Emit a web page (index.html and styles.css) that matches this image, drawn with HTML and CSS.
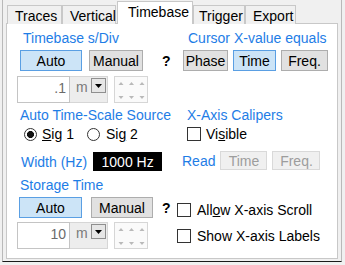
FILE: index.html
```html
<!DOCTYPE html>
<html>

<head>
    <title>Timebase</title>
    <link rel="stylesheet" href="styles.css">
</head>

<body>
    <div class="frame">
        <div class="tabctl">
            <div class="tabs">
                <div class="tab t-traces">Traces</div>
                <div class="tab t-vert">Vertical</div>
                <div class="tab active t-time">Timebase</div>
                <div class="tab t-trig">Trigger</div>
                <div class="tab t-exp">Export</div>
            </div>
            <div class="panel">
                <div class="grid">
                    <!-- row 1 -->
                    <div class="lbl hd-tb">Timebase s/Div</div>
                    <div class="lbl hd-cur">Cursor X-value equals</div>

                    <!-- row 2 -->
                    <div class="row tb-mode">
                        <div class="btn on w-auto">Auto</div>
                        <div class="btn w-man">Manual</div>
                        <div class="help">?</div>
                    </div>
                    <div class="row cur-mode">
                        <div class="btn w-phase">Phase</div>
                        <div class="btn on w-time">Time</div>
                        <div class="btn w-freq">Freq.</div>
                    </div>

                    <!-- row 3 -->
                    <div class="spin">
                        <div class="spin-val">.1</div>
                        <div class="unit">
                            <span class="unit-m">m</span>
                            <span class="drop"><svg width="13" height="13" viewBox="0 0 13 13"><polygon points="3,5 10,5 6.5,9" fill="#000"/></svg></span>
                        </div>
                        <div class="stepper"><svg width="32" height="25" viewBox="0 0 32 25">
                            <g fill="#b9b9b9">
                                <polygon points="3.5,8 8.5,8 6,5"/>
                                <polygon points="14,8 19,8 16.5,5"/>
                                <polygon points="24.5,8 29.5,8 27,5"/>
                                <polygon points="3.5,19 8.5,19 6,22"/>
                                <polygon points="14,19 19,19 16.5,22"/>
                                <polygon points="24.5,19 29.5,19 27,22"/>
                            </g>
                        </svg></div>
                    </div>
                    <div></div>

                    <!-- row 4 -->
                    <div class="lbl hd-src">Auto Time-Scale Source</div>
                    <div class="lbl hd-cal">X-Axis Calipers</div>

                    <!-- row 5 -->
                    <div class="row radios">
                        <span class="radio on"></span><span class="opt"><u>S</u>ig 1</span>
                        <span class="radio r2"></span><span class="opt o2">Si<u>g</u> 2</span>
                    </div>
                    <div class="row chk-vis">
                        <span class="check"></span><span class="opt">Vi<u>s</u>ible</span>
                    </div>

                    <!-- row 6 -->
                    <div class="row width-row">
                        <span class="lbl-in">Width (Hz)</span>
                        <span class="readout">1000 Hz</span>
                    </div>
                    <div class="row read-row">
                        <span class="lbl-in">Read</span>
                        <div class="btn off w-rtime">Time</div>
                        <div class="btn off w-rfreq">Freq.</div>
                    </div>

                    <!-- row 7 -->
                    <div class="lbl hd-store">Storage Time</div>
                    <div></div>

                    <!-- row 8 -->
                    <div class="row st-mode">
                        <div class="btn on w-auto2">Auto</div>
                        <div class="btn w-man2">Manual</div>
                        <div class="help">?</div>
                    </div>
                    <div class="row chk-scroll">
                        <span class="check"></span><span class="opt">All<u>o</u>w X-axis Scroll</span>
                    </div>

                    <!-- row 9 -->
                    <div class="spin">
                        <div class="spin-val">10</div>
                        <div class="unit">
                            <span class="unit-m">m</span>
                            <span class="drop"><svg width="13" height="13" viewBox="0 0 13 13"><polygon points="3,5 10,5 6.5,9" fill="#000"/></svg></span>
                        </div>
                        <div class="stepper"><svg width="32" height="25" viewBox="0 0 32 25">
                            <g fill="#b9b9b9">
                                <polygon points="3.5,8 8.5,8 6,5"/>
                                <polygon points="14,8 19,8 16.5,5"/>
                                <polygon points="24.5,8 29.5,8 27,5"/>
                                <polygon points="3.5,19 8.5,19 6,22"/>
                                <polygon points="14,19 19,19 16.5,22"/>
                                <polygon points="24.5,19 29.5,19 27,22"/>
                            </g>
                        </svg></div>
                    </div>
                    <div class="row chk-labels">
                        <span class="check"></span><span class="opt">Show X-axis Labels</span>
                    </div>
                </div>
            </div>
        </div>
    </div>
</body>

</html>
```

FILE: styles.css
```css
* {
    box-sizing: border-box;
}

body {
    margin: 0;
    background-color: #f0f0f0;
    font-family: "Liberation Sans", Arial, sans-serif;
    font-size: 14px;
    line-height: 16px;
    color: #000;
}

.frame {
    margin-left: 2px;
    width: 340px;
    height: 262px;
    border-left: 1px solid #b9b9b9;
    border-right: 1px solid #b9b9b9;
    border-bottom: 1px solid #1a1a1a;
}

.tabctl {
    margin-left: 3px;
    width: 332px;
}

/* tabs */

.tabs {
    display: flex;
    align-items: flex-end;
    height: 24px;
    padding-left: 1px;
}

.tab {
    height: 19px;
    padding: 2px 0 0 7px;
    border: 1px solid #c8c8c8;
    border-bottom: none;
    background-color: #f0f0f0;
    white-space: nowrap;
}

.tab.active {
    position: relative;
    z-index: 1;
    height: 23px;
    padding-left: 10px;
    background-color: #fff;
}

.t-traces { width: 55px; }
.t-vert { width: 54px; }
.t-time { width: 76px; margin-left: 1px; }
.t-trig { width: 52px; padding-left: 5px; }
.t-exp { width: 51px; }

.panel {
    margin-top: -1px;
    height: 236px;
    background-color: #fff;
    border: 1px solid #c8c8c8;
    padding: 6px 0 0 10px;
}

.grid {
    display: grid;
    grid-template-columns: 158px 1fr;
    grid-template-rows: 16px 25px 32px 20px 19px 29px 22px 25px 31px;
    align-items: end;
    white-space: nowrap;
}

.lbl,
.lbl-in {
    color: #1e7de6;
}

.hd-tb { margin-left: 6px; }
.hd-cur { margin-left: 13px; }
.hd-src { margin-left: 3px; }
.hd-cal { margin-left: 12px; }
.hd-store { margin-left: 3px; }

.row {
    display: flex;
    align-items: center;
}

/* buttons */

.btn {
    display: flex;
    align-items: center;
    justify-content: center;
    height: 21px;
    border: 1px solid #adadad;
    background-color: #e1e1e1;
}

.btn.on {
    background-color: #cce4f7;
    border-color: #5a9fe3;
}

.btn.off {
    height: 19px;
    background-color: #f0f0f0;
    border-color: #d9d9d9;
    color: #9d9d9d;
}

.help {
    font-weight: bold;
}

.tb-mode { margin-left: 3px; }
.w-auto { width: 62px; }
.w-man { width: 54px; margin-left: 7px; }
.tb-mode .help { margin-left: 19px; }

.cur-mode {
    margin-left: 8px;
    gap: 5px;
}

.w-phase { width: 45px; }
.w-time { width: 43px; }
.w-freq { width: 47px; }

.st-mode { margin-left: 2px; }
.w-auto2 { width: 63px; }
.w-man2 { width: 62px; margin-left: 9px; }
.st-mode .help { margin-left: 9px; }

/* spin box */

.spin {
    display: flex;
    height: 27px;
}

.spin-val {
    width: 53px;
    border: 1px solid #c4c4c4;
    background-color: #fff;
    text-align: right;
    padding: 3px 3px 0 0;
    color: #6b6b6b;
}

.unit {
    display: flex;
    align-items: flex-start;
    width: 38px;
    border: 1px solid #d6d6d6;
    border-left: none;
    background-color: #ededed;
}

.unit-m {
    padding: 2px 0 0 6px;
    color: #7a7a7a;
}

.drop {
    display: block;
    width: 15px;
    height: 15px;
    margin: 1px 0 0 3px;
    border: 1px solid #8f8f8f;
    background-color: #e6e6e6;
}

.drop svg {
    display: block;
}

.stepper {
    width: 34px;
    margin-left: 6px;
    border: 1px solid #d6d6d6;
    background-color: #fafafa;
}

.stepper svg {
    display: block;
}

/* radio / check */

.radio {
    display: block;
    width: 13px;
    height: 13px;
    border: 1px solid #333;
    border-radius: 50%;
    background-color: #fff;
}

.radio.on {
    background: radial-gradient(circle, #111 0, #111 3.2px, #fff 3.8px);
}

.radios { margin-left: 7px; }
.radios .opt { margin-left: 5px; }
.radios .r2 { margin-left: 13px; }
.radios .o2 { margin-left: 6px; }

.check {
    display: block;
    width: 14px;
    height: 14px;
    border: 1px solid #333;
    background-color: #fff;
}

.chk-vis { margin-left: 12px; }
.chk-vis .opt { margin-left: 5px; }

.chk-scroll { margin-left: 2px; }
.chk-labels { margin-left: 2px; margin-bottom: 5px; }
.chk-scroll .opt,
.chk-labels .opt { margin-left: 6px; }

u {
    text-decoration-thickness: 1px;
}

/* width / read */

.width-row { margin-left: 4px; }

.readout {
    width: 69px;
    height: 19px;
    margin-left: 6px;
    background-color: #000;
    color: #fff;
    text-align: center;
    padding-top: 2px;
}

.read-row {
    margin-left: 7px;
    margin-bottom: 1px;
}

.w-rtime { width: 47px; margin-left: 5px; }
.w-rfreq { width: 48px; margin-left: 5px; }
```
